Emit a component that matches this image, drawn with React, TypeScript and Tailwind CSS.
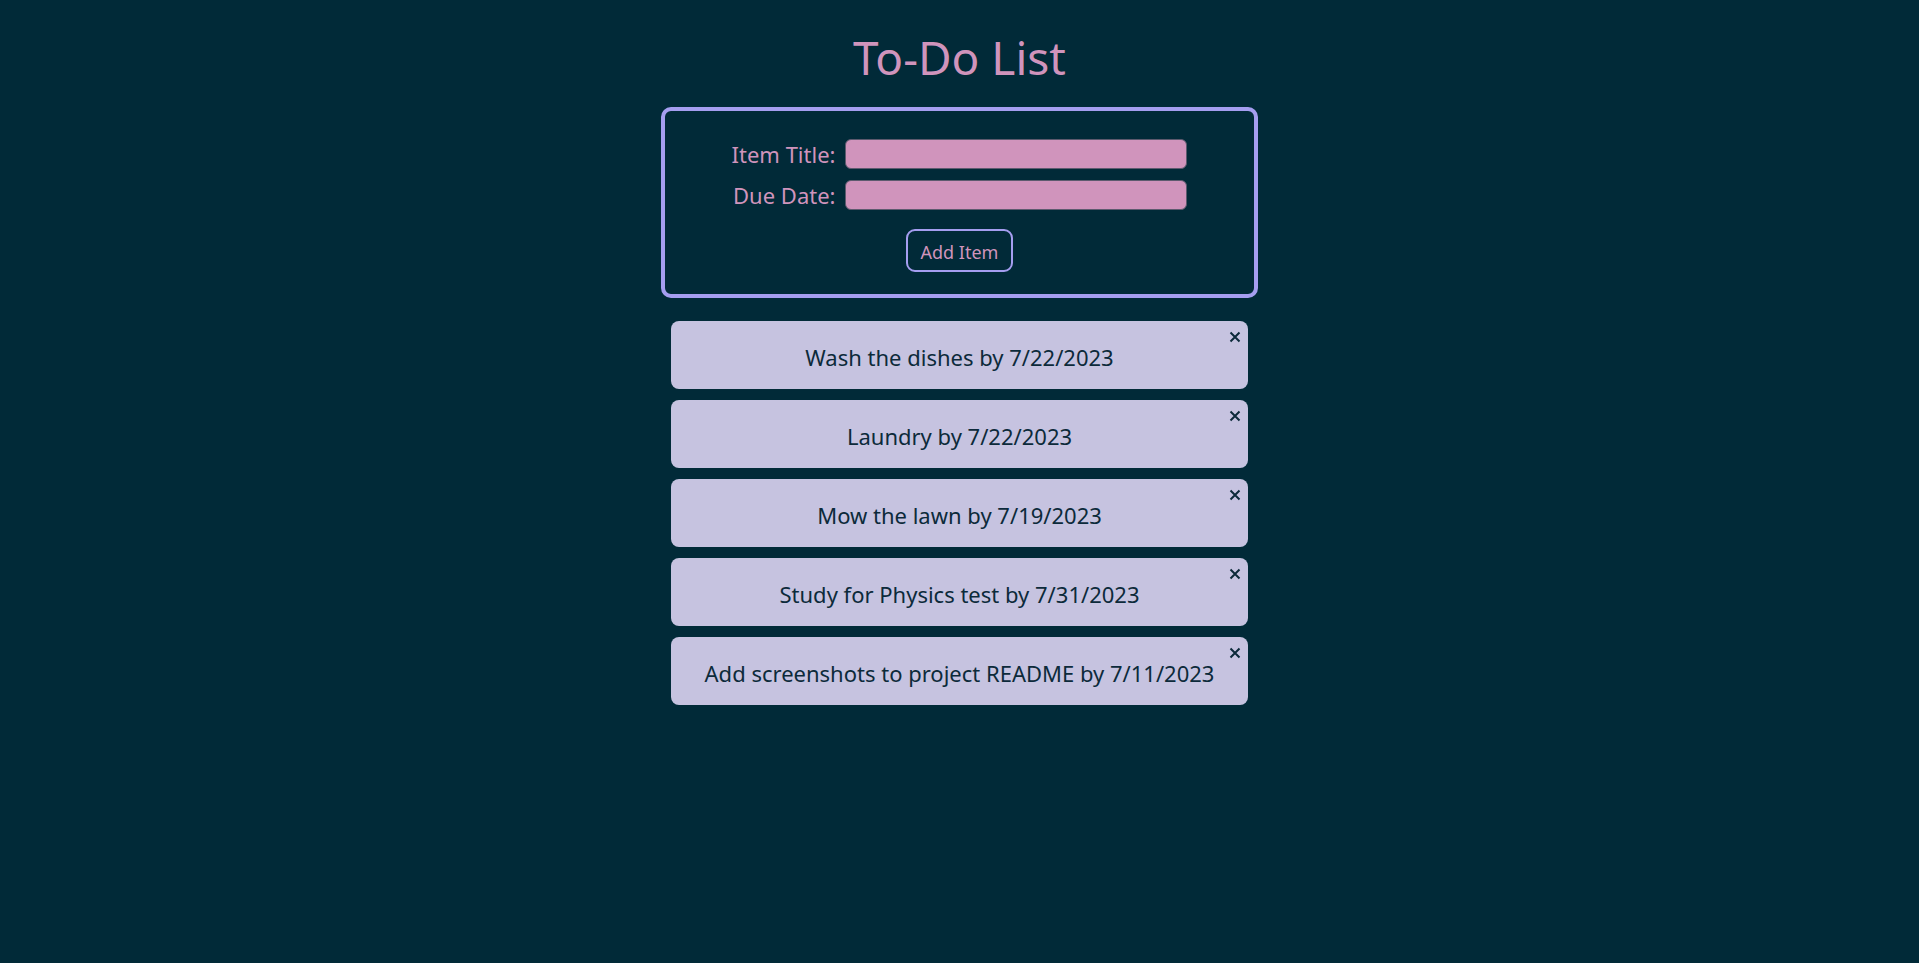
import React, { useState } from "react";

type Todo = { id: number; title: string; due: string };

const initial: Todo[] = [
  { id: 1, title: "Wash the dishes", due: "7/22/2023" },
  { id: 2, title: "Laundry", due: "7/22/2023" },
  { id: 3, title: "Mow the lawn", due: "7/19/2023" },
  { id: 4, title: "Study for Physics test", due: "7/31/2023" },
  { id: 5, title: "Add screenshots to project README", due: "7/11/2023" },
];

export default function App() {
  const [todos, setTodos] = useState<Todo[]>(initial);
  const [title, setTitle] = useState("");
  const [due, setDue] = useState("");

  const add = () => {
    if (!title) return;
    setTodos([...todos, { id: Date.now(), title, due }]);
    setTitle("");
    setDue("");
  };

  return (
    <div className="min-h-screen bg-[#012a38] flex flex-col items-center font-['Noto_Sans',sans-serif]">
      <h1 className="pt-[30px] text-[46px] leading-[54px] text-[#d094bc]">To-Do List</h1>

      {/* form card */}
      <div className="mt-[23px] w-[597px] h-[191px] border-4 border-[#a59ef0] rounded-[10px] pt-[28px] flex flex-col items-center">
        <div className="grid grid-cols-[auto_342px] gap-x-[10px] gap-y-[11px] items-center">
          <label className="text-right text-[22px] leading-[30px] text-[#d094bc]">Item Title:</label>
          <input
            value={title}
            onChange={(e) => setTitle(e.target.value)}
            className="h-[30px] rounded-[6px] border border-[#5d5a6e] bg-[#d094bc] px-2 text-[#012a38] outline-none"
          />
          <label className="text-right text-[22px] leading-[30px] text-[#d094bc]">Due Date:</label>
          <input
            value={due}
            onChange={(e) => setDue(e.target.value)}
            className="h-[30px] rounded-[6px] border border-[#5d5a6e] bg-[#d094bc] px-2 text-[#012a38] outline-none"
          />
        </div>
        <button
          onClick={add}
          className="mt-[19px] w-[107px] h-[43px] pt-[4px] border-2 border-[#a59ef0] rounded-[9px] text-[18px] text-[#d094bc]"
        >
          Add Item
        </button>
      </div>

      {/* items */}
      <div className="mt-[23px] flex flex-col gap-[11px]">
        {todos.map((t) => (
          <div
            key={t.id}
            className="relative w-[577px] h-[68px] rounded-[8px] bg-[#c6c3e0] flex items-center justify-center pt-[4px]"
          >
            <span className="text-[22px] text-[#0c2a3a]">
              {t.title} by {t.due}
            </span>
            <button
              onClick={() => setTodos(todos.filter((x) => x.id !== t.id))}
              className="absolute right-[7px] top-[10px] w-[12px] h-[12px] flex items-center justify-center"
            >
              <svg width="12" height="12" viewBox="0 0 12 12">
                <path d="M1.5 1.5 L10.5 10.5 M10.5 1.5 L1.5 10.5" stroke="#0c2a3a" strokeWidth="2" />
              </svg>
            </button>
          </div>
        ))}
      </div>
    </div>
  );
}
